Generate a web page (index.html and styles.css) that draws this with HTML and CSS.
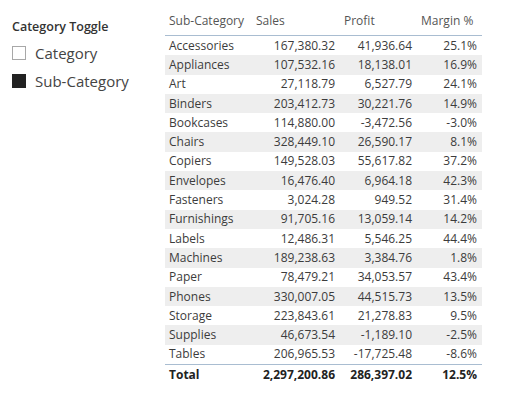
FILE: index.html
```html
<!DOCTYPE html>
<html lang="en">
<head>
  <meta charset="UTF-8" />
  <title>Sub-Category Profit</title>
  <link rel="stylesheet" href="styles.css">
</head>
<body>
  <div class="report">
    <div class="slicer">
      <div class="slicer-title">Category Toggle</div>
      <div class="slicer-item"><span class="box"></span>Category</div>
      <div class="slicer-item"><span class="box checked"></span>Sub-Category</div>
    </div>

    <table class="matrix">
      <thead>
        <tr>
          <th class="c1">Sub-Category</th>
          <th class="c2">Sales</th>
          <th class="c3">Profit</th>
          <th class="c4">Margin %</th>
        </tr>
      </thead>
      <tbody>
        <tr><td>Accessories</td><td>167,380.32</td><td>41,936.64</td><td>25.1%</td></tr>
        <tr><td>Appliances</td><td>107,532.16</td><td>18,138.01</td><td>16.9%</td></tr>
        <tr><td>Art</td><td>27,118.79</td><td>6,527.79</td><td>24.1%</td></tr>
        <tr><td>Binders</td><td>203,412.73</td><td>30,221.76</td><td>14.9%</td></tr>
        <tr><td>Bookcases</td><td>114,880.00</td><td>-3,472.56</td><td>-3.0%</td></tr>
        <tr><td>Chairs</td><td>328,449.10</td><td>26,590.17</td><td>8.1%</td></tr>
        <tr><td>Copiers</td><td>149,528.03</td><td>55,617.82</td><td>37.2%</td></tr>
        <tr><td>Envelopes</td><td>16,476.40</td><td>6,964.18</td><td>42.3%</td></tr>
        <tr><td>Fasteners</td><td>3,024.28</td><td>949.52</td><td>31.4%</td></tr>
        <tr><td>Furnishings</td><td>91,705.16</td><td>13,059.14</td><td>14.2%</td></tr>
        <tr><td>Labels</td><td>12,486.31</td><td>5,546.25</td><td>44.4%</td></tr>
        <tr><td>Machines</td><td>189,238.63</td><td>3,384.76</td><td>1.8%</td></tr>
        <tr><td>Paper</td><td>78,479.21</td><td>34,053.57</td><td>43.4%</td></tr>
        <tr><td>Phones</td><td>330,007.05</td><td>44,515.73</td><td>13.5%</td></tr>
        <tr><td>Storage</td><td>223,843.61</td><td>21,278.83</td><td>9.5%</td></tr>
        <tr><td>Supplies</td><td>46,673.54</td><td>-1,189.10</td><td>-2.5%</td></tr>
        <tr><td>Tables</td><td>206,965.53</td><td>-17,725.48</td><td>-8.6%</td></tr>
      </tbody>
      <tfoot>
        <tr><td>Total</td><td>2,297,200.86</td><td>286,397.02</td><td>12.5%</td></tr>
      </tfoot>
    </table>
  </div>
</body>
</html>
```

FILE: styles.css
```css
* {
  margin: 0;
  padding: 0;
  box-sizing: border-box;
}

body {
  background: #ffffff;
  color: #333333;
  font-family: 'Open Sans', 'Noto Sans', sans-serif;
}

.report {
  display: flex;
  align-items: flex-start;
}

.slicer {
  width: 165px;
  padding: 18px 0 0 12px;
}

.slicer-title {
  font-size: 12.5px;
  font-weight: 600;
  color: #333333;
  height: 17px;
  line-height: 17px;
  margin-bottom: 4px;
}

.slicer-item {
  display: flex;
  align-items: center;
  gap: 9px;
  height: 28px;
  font-size: 15px;
  color: #444444;
}

.box {
  width: 14px;
  height: 14px;
  border: 1px solid #a8a8a8;
  background: #ffffff;
}

.box.checked {
  background: #222222;
  border-color: #222222;
}

.matrix {
  width: 317px;
  border-collapse: separate;
  border-spacing: 0;
  font-size: 12px;
  color: #3c3c3c;
}

.matrix th {
  height: 36px;
  padding: 5px 5px 0 4px;
  text-align: left;
  font-weight: 400;
  color: #555555;
  border-bottom: 1px solid #a9bdd1;
}

.c1 { width: 87px; }
.c2 { width: 88px; }
.c3 { width: 77px; }
.c4 { width: 65px; }

.matrix td {
  height: 19.3px;
  padding: 0 5px 0 4px;
  text-align: right;
  white-space: nowrap;
  line-height: 16px;
}

.matrix td:first-child {
  text-align: left;
}

.matrix tbody tr:nth-child(even) td {
  background: #eeeeee;
}

.matrix tfoot td {
  height: 21px;
  border-top: 1px solid #a9bdd1;
  font-weight: 700;
  color: #222222;
}
```
